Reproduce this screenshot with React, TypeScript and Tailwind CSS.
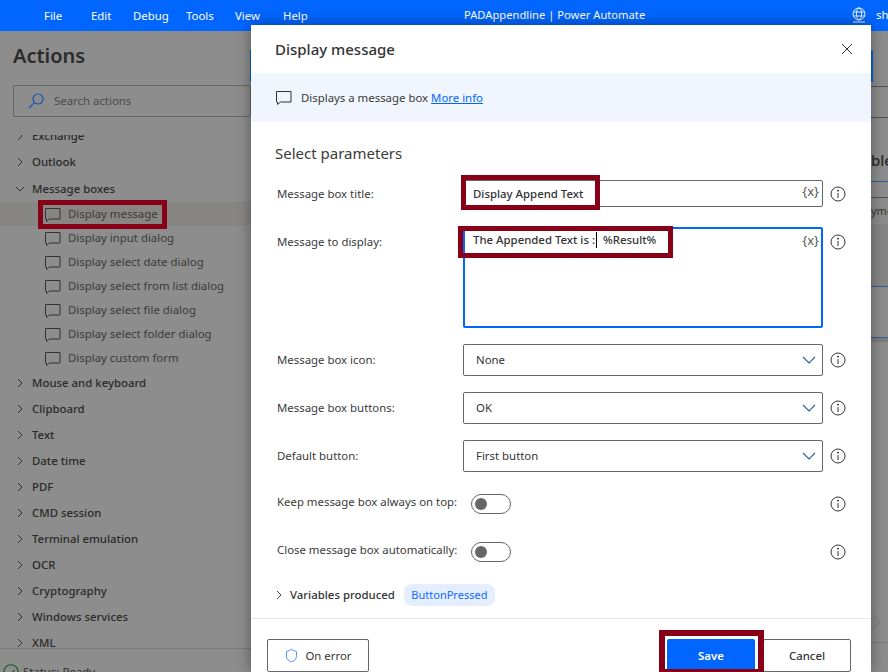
import { Shield } from "lucide-react";

const menus = [
  { label: "File", cell: "w-[47px]" },
  { label: "Edit", cell: "w-[42px]" },
  { label: "Debug", cell: "w-[53px]" },
  { label: "Tools", cell: "w-[49px]" },
  { label: "View", cell: "w-[48px]" },
  { label: "Help", cell: "w-[30px]" },
];
const dialogs = [
  "Display message",
  "Display input dialog",
  "Display select date dialog",
  "Display select from list dialog",
  "Display select file dialog",
  "Display select folder dialog",
  "Display custom form",
];
const groups = ["Mouse and keyboard", "Clipboard", "Text", "Date time", "PDF", "CMD session", "Terminal emulation", "OCR", "Cryptography", "Windows services", "XML"];

function Bubble({ className }: { className: string }) {
  return (
    <svg viewBox="0 0 17 15" width="17" height="15" fill="none" stroke="currentColor" className={className}>
      <path d="M1.5 1.5h14.5v10.5H5.5L2.5 14.5v-2.5h-1z" strokeLinejoin="round" />
    </svg>
  );
}

function Chevron({ down }: { down?: boolean }) {
  return (
    <svg viewBox="0 0 10 10" width="10" height="10" fill="none" stroke="#333" className="shrink-0">
      <path d={down ? "M1 3l4 4 4-4" : "M3 1l4 4-4 4"} />
    </svg>
  );
}

function Info() {
  return (
    <svg viewBox="0 0 16 16" width="16" height="16" fill="none" stroke="#333" className="shrink-0">
      <circle cx="8" cy="8" r="7" />
      <path d="M8 7v5" />
      <circle cx="8" cy="4.6" r="0.6" fill="#333" />
    </svg>
  );
}

function Row({ label, children }: { label: string; children: React.ReactNode }) {
  return (
    <div className="flex items-center">
      <div className="w-[186px] shrink-0 text-[#3a3a3a]">{label}</div>
      <div className="w-[360px] shrink-0">{children}</div>
      <div className="ml-[7px]">
        <Info />
      </div>
    </div>
  );
}

function Select({ value }: { value: string }) {
  return (
    <div className="flex h-8 items-center justify-between rounded-[2px] border border-[#666] pl-[12px] pr-[5px] text-[#333]">
      <span>{value}</span>
      <svg viewBox="0 0 14 8" width="14" height="8" fill="none" stroke="#34609f" strokeWidth="1.2" className="mr-[1px]">
        <path d="M1 1l6 6 6-6" />
      </svg>
    </div>
  );
}

function Toggle({ label }: { label: string }) {
  return (
    <div className="flex items-center">
      <div className="-mt-[5px] w-[194px] shrink-0 text-[#3a3a3a]">{label}</div>
      <div className="flex h-5 w-10 shrink-0 items-center rounded-full border border-[#666] pl-[3px]">
        <div className="h-3 w-3 rounded-full bg-[#666]" />
      </div>
      <div className="ml-[319px]">
        <Info />
      </div>
    </div>
  );
}

function Ghost() {
  return (
    <div className="flex w-[17px] shrink-0 flex-col overflow-hidden">
      <div className="mt-[55px] h-px shrink-0 bg-[#555]" />
      <div className="mt-[30px] h-px shrink-0 bg-[#555]" />
      <div className="mt-[29px] h-[26px] shrink-0 whitespace-nowrap text-[15px] font-medium leading-[26px] text-[#2a2a2a]">ble</div>
      <div className="mt-[8px] h-px shrink-0 bg-[#2f5f9f]" />
      <div className="mt-[15px] h-px shrink-0 bg-[#555]" />
      <div className="mt-[5px] h-4 shrink-0 whitespace-nowrap text-[11px] leading-4 text-[#333]">yme</div>
      <div className="mt-[5px] h-[62px] shrink-0 bg-[#868686]" />
      <div className="h-px shrink-0 bg-[#2f5f9f]" />
      <div className="mt-[50px] h-px shrink-0 bg-[#2f5f9f]" />
      <div className="h-[4px] shrink-0 bg-[#7d7d7d]" />
      <div className="mt-[272px] flex shrink-0 justify-start pl-[1px] opacity-50">
        <svg viewBox="0 0 8 16" width="8" height="16" fill="none" stroke="#666">
          <path d="M1 1l6 7-6 7" />
        </svg>
      </div>
      <div className="mt-[12px] h-px shrink-0 bg-[#7a7a7a]" />
    </div>
  );
}

export default function App() {
  return (
    <div className="relative h-[672px] w-[888px] overflow-hidden bg-[#8d8d8d] font-['Noto_Sans',sans-serif] text-[11.4px]">
      <div className="relative flex h-[31px] items-start bg-[#0066ff] pl-[44px] pt-[7px] text-white">
        <div className="flex">
          {menus.map((m) => (
            <span key={m.label} className={m.cell}>
              {m.label}
            </span>
          ))}
        </div>
        <span className="absolute left-[464px] top-[7px] text-[11.2px]">PADAppendline | Power Automate</span>
        <div className="absolute left-[851px] top-[6px] flex items-center gap-[9px] whitespace-nowrap">
          <svg viewBox="0 0 16 16" width="16" height="16" fill="none" stroke="white" strokeWidth="0.9" className="shrink-0">
            <circle cx="8" cy="7" r="6" />
            <ellipse cx="8" cy="7" rx="2.6" ry="6" />
            <path d="M2 5h12M2 9h12M2 15h12" />
          </svg>
          <span>sha</span>
        </div>
      </div>

      <div className="flex h-[641px] justify-between">
        <div className="flex w-[251px] flex-col">
          <div className="flex h-[50px] shrink-0 items-center pl-[13px] text-xl font-semibold text-[#2b2b2b]">Actions</div>
          <div className="ml-[13px] mt-[4px] flex h-8 shrink-0 items-center gap-[10px] rounded-[2px] border border-[#666] pl-[14px] text-[#4b4b4b]">
            <svg viewBox="0 0 16 16" width="16" height="16" fill="none" stroke="#1d56ad" strokeWidth="1.2">
              <circle cx="10" cy="6" r="5" />
              <path d="M6.3 9.7L1 15" />
            </svg>
            Search actions
          </div>
          <div className="mt-[18px] h-[513px] shrink-0 overflow-hidden text-[#2a2a2a]">
            <div className="-mt-[12px] flex h-[26px] items-center gap-[7px] pl-[15px] font-medium">
              <Chevron />
              Exchange
            </div>
            <div className="flex h-[26px] items-center gap-[7px] pl-[15px] font-medium">
              <Chevron />
              Outlook
            </div>
            <div className="flex h-[27px] items-center gap-[7px] pl-[15px] font-medium">
              <Chevron down />
              Message boxes
            </div>
            {dialogs.map((d, i) => (
              <div key={d} className={`flex h-6 items-center gap-[7px] pl-[44px] text-[#3a3a3a] ${i === 0 ? "bg-[#888683]" : ""}`}>
                <Bubble className="text-[#333]" />
                {d}
              </div>
            ))}
            {groups.map((g) => (
              <div key={g} className="flex h-[26px] items-center gap-[7px] pl-[15px] font-medium">
                <Chevron />
                {g}
              </div>
            ))}
          </div>
          <div className="flex min-h-0 flex-1 items-start gap-[4px] overflow-hidden border-t border-[#7a7a7a] pl-[3px] pt-[15px] text-[#2a2a2a]">
            <svg viewBox="0 0 16 16" width="16" height="16" fill="none" stroke="#0d5c1a" strokeWidth="1.1" className="shrink-0">
              <circle cx="8" cy="8" r="7.2" />
              <path d="M4.5 8.5l2.5 2.5 4.5-5" />
            </svg>
            <span className="leading-4">Status: Ready</span>
          </div>
        </div>
        <Ghost />
      </div>

      {/* slivers of the blue ribbon behind the dialog */}
      <div className="absolute left-[250px] top-[50px] h-8 w-px bg-[#0a5fe0]" />
      <div className="absolute left-[871px] top-[50px] h-8 w-[2px] bg-[#0a5fe0]" />

      <div className="absolute left-[251px] top-[25px] flex h-[647px] w-[620px] flex-col bg-white shadow-[0_0_14px_rgba(0,0,0,0.4)]">
        <div className="flex h-12 shrink-0 items-center justify-between pl-[24px] pr-[18px]">
          <span className="text-[15px] font-medium text-[#333]">Display message</span>
          <svg viewBox="0 0 12 12" width="12" height="12" fill="none" stroke="#333">
            <path d="M1 1l10 10M11 1L1 11" />
          </svg>
        </div>
        <div className="flex h-[49px] shrink-0 items-center gap-[9px] bg-[#f0f5fe] pl-[24px] text-[#3a3a3a]">
          <Bubble className="text-[#333]" />
          <span>
            Displays a message box <span className="text-[#0066ff] underline">More info</span>
          </span>
        </div>

        <div className="flex-1 pl-[26px]">
          <div className="-ml-[2px] flex h-[58px] items-start pt-[20px] text-[15px] leading-[22px] text-[#3a3a3a]">Select parameters</div>

          <Row label="Message box title:">
            <div className="flex h-[27px] items-center justify-between rounded-[2px] border border-[#666] pl-[9px] pr-[3px]">
              <span className="font-medium text-[#333]">Display Append Text</span>
              <span className="-mt-[3px] text-[13px] text-[#555]">{"{x}"}</span>
            </div>
          </Row>

          <div className="mt-5 flex items-start">
            <div className="w-[186px] shrink-0 pt-[6px] text-[#3a3a3a]">Message to display:</div>
            <div className="flex h-[101px] w-[360px] shrink-0 items-start justify-between rounded-[2px] border-2 border-[#0066ff] pl-[8px] pr-[2px] pt-[1px] leading-5">
              <span className="flex items-center font-medium text-[#333]">
                The Appended Text is :<span className="ml-[1px] mr-[6px] h-4 w-px bg-black" />
                %Result%
              </span>
              <span className="text-[13px] text-[#555]">{"{x}"}</span>
            </div>
            <div className="ml-[7px] mt-[7px]">
              <Info />
            </div>
          </div>

          <div className="mt-[16px] flex flex-col gap-4">
            <Row label="Message box icon:">
              <Select value="None" />
            </Row>
            <Row label="Message box buttons:">
              <Select value="OK" />
            </Row>
            <Row label="Default button:">
              <Select value="First button" />
            </Row>
          </div>

          <div className="mt-[22px] flex flex-col gap-7">
            <Toggle label="Keep message box always on top:" />
            <Toggle label="Close message box automatically:" />
          </div>

          <div className="mt-[22px] flex h-[22px] items-center">
            <svg viewBox="0 0 10 10" width="10" height="10" fill="none" stroke="#444" className="-ml-[3px]">
              <path d="M3 1l4 4-4 4" />
            </svg>
            <span className="ml-[6px] font-medium text-[#333]">Variables produced</span>
            <span className="ml-[9px] flex h-[22px] w-[91px] items-center justify-center rounded-[8px] bg-[#e4eeff] text-[11px] text-[#0f6cff]">ButtonPressed</span>
          </div>
        </div>

        <div className="flex h-[54px] shrink-0 items-start justify-between border-t border-[#e6e6e6] pl-[16px] pr-[20px] pt-[20px]">
          <div className="flex h-[33px] w-[102px] items-center justify-center gap-[6px] rounded-[2px] border border-[#666] text-[#333]">
            <Shield size={15} strokeWidth={1.2} className="text-[#0f6cff]" />
            On error
          </div>
          <div className="flex">
            <div className="flex h-[33px] w-[88px] items-center justify-center rounded-[2px] bg-[#0066ff] font-semibold text-white">Save</div>
            <div className="ml-[8px] flex h-[33px] w-[88px] items-center justify-center rounded-[2px] border border-[#666] font-medium text-[#333]">Cancel</div>
          </div>
        </div>
      </div>

      {/* red callouts drawn over the screenshot */}
      <div className="absolute left-[38px] top-[200px] h-[29px] w-[129px] border-[5px] border-[#870017]" />
      <div className="absolute left-[461px] top-[175px] h-[35px] w-[139px] border-[5px] border-[#870017]" />
      <div className="absolute left-[458px] top-[226px] h-[32px] w-[215px] border-[5px] border-[#870017]" />
      <div className="absolute left-[659px] top-[630px] h-[45px] w-[105px] border-[6px] border-[#870017]" />
    </div>
  );
}
